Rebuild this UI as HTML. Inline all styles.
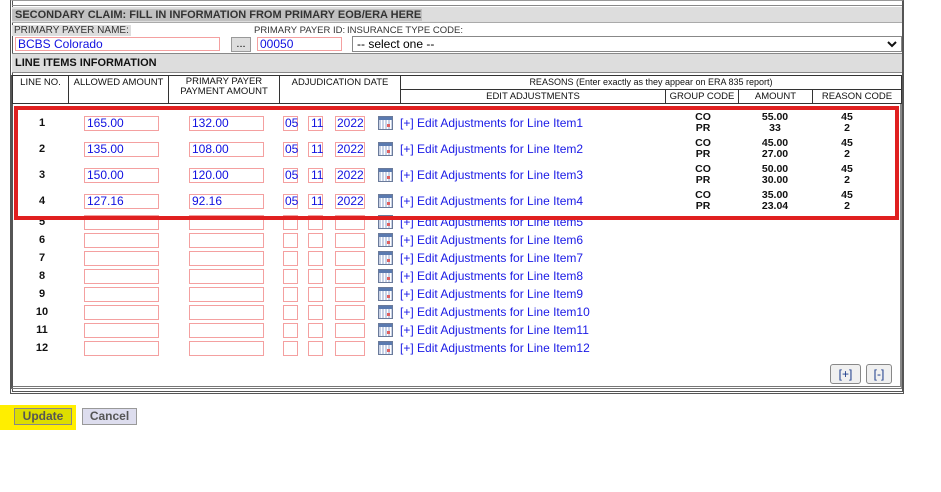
<!DOCTYPE html>
<html><head><meta charset="utf-8"><style>
*{box-sizing:border-box;margin:0;padding:0}
body{width:941px;height:492px;background:#fff;font-family:"Liberation Sans",Arial,sans-serif;position:relative;overflow:hidden}
.a{position:absolute}
.lbl{font-size:10px;color:#333}
.inp{position:absolute;border:1px solid #f4a0a0;background:#fff;font-size:12px;color:#1010e0;padding-left:2px;line-height:13px;height:15px}
.hd{position:absolute;font-size:9.5px;color:#111;text-align:center;border:1px solid #333;background:#fff;padding-top:1px}
.num{position:absolute;font-size:11px;font-weight:bold;color:#111;text-align:center;width:30px}
.link{position:absolute;font-size:12px;color:#1a1ae6;left:400px}
.cal{position:absolute;left:378px;width:15px;height:14px;border:1px solid #6a7a9a;background:repeating-linear-gradient(90deg,#c8d2e6 0 2px,#fff 2px 3px);}
.cal:before{content:"";position:absolute;left:0;right:0;top:0;height:3px;background:#5a7ab0}
.cal:after{content:"";position:absolute;left:8px;top:7px;width:3px;height:3px;background:#e06060}
.cd{position:absolute;font-size:10.5px;font-weight:bold;color:#111;text-align:center;line-height:11px}
</style></head><body>
<div class="a" style="left:10px;top:0;width:894px;height:394px;border-left:3px double #555;border-right:2px solid #555;border-bottom:3px double #555;border-top:1px solid #999"></div>
<div class="a" style="left:12px;top:0;width:890px;height:6px;border-bottom:1px solid #888"></div>
<div class="a" style="left:12px;top:7px;width:890px;height:16px;background:#ddd;border-bottom:1px solid #aaa"></div>
<div class="a" style="left:12px;top:9px;width:410px;height:12px;background:#c0c0c0;font-size:11px;font-weight:bold;color:#333;padding-left:3px;line-height:12px">SECONDARY CLAIM: FILL IN INFORMATION FROM PRIMARY EOB/ERA HERE</div>
<div class="a lbl" style="left:12px;top:25px;background:#ddd;padding:0 2px;height:11px;line-height:11px">PRIMARY PAYER NAME:</div>
<div class="a lbl" style="left:254px;top:25px;line-height:11px;font-size:9.5px">PRIMARY PAYER ID:</div>
<div class="a lbl" style="left:347px;top:25px;line-height:11px;font-size:9.5px">INSURANCE TYPE CODE:</div>
<div class="inp" style="left:15px;top:37px;width:205px;height:14px">BCBS Colorado</div>
<div class="a" style="left:231px;top:37px;width:20px;height:15px;background:#ddd;border:1px solid #999;font-size:11px;text-align:center;line-height:12px">...</div>
<div class="inp" style="left:257px;top:37px;width:85px;height:14px">00050</div>
<div class="a" style="left:352px;top:36px;width:550px;height:16px;border:1px solid #888;font-size:12px;padding-left:4px;line-height:14px">-- select one --<svg style="position:absolute;right:4px;top:4px" width="10" height="7" viewBox="0 0 10 7"><path d="M1 1 L5 5 L9 1" stroke="#111" stroke-width="2" fill="none"/></svg></div>
<div class="a" style="left:12px;top:53px;width:890px;height:20px;background:#ddd;border-top:1px solid #888;border-bottom:1px solid #888;font-size:11px;font-weight:bold;color:#111;padding-left:3px;line-height:19px">LINE ITEMS INFORMATION</div>
<div class="a" style="left:11px;top:75px;width:891px;height:314px;border:2px solid #555;border-right-color:#888;border-bottom:3px double #777"></div>
<div class="hd" style="left:12px;top:75px;width:57px;height:29px">LINE NO.</div>
<div class="hd" style="left:68px;top:75px;width:101px;height:29px">ALLOWED AMOUNT</div>
<div class="hd" style="left:168px;top:75px;width:112px;height:29px;line-height:10px">PRIMARY PAYER<br>PAYMENT AMOUNT</div>
<div class="hd" style="left:279px;top:75px;width:122px;height:29px">ADJUDICATION DATE</div>
<div class="hd" style="left:400px;top:75px;width:502px;height:15px;font-size:9px">REASONS (Enter exactly as they appear on ERA 835 report)</div>
<div class="hd" style="left:400px;top:89px;width:266px;height:15px">EDIT ADJUSTMENTS</div>
<div class="hd" style="left:665px;top:89px;width:74px;height:15px">GROUP CODE</div>
<div class="hd" style="left:738px;top:89px;width:75px;height:15px">AMOUNT</div>
<div class="hd" style="left:812px;top:89px;width:90px;height:15px">REASON CODE</div>
<div id="rows"></div>
<div class="a" style="left:14px;top:106px;width:885px;height:114px;border:4px solid #e02020"></div>
<div class="a" style="left:830px;top:364px;width:31px;height:20px;border:1px solid #888;border-radius:3px;background:#f0f0f0;font-size:12px;text-align:center;line-height:18px;color:#1a3a8a">[+]</div>
<div class="a" style="left:866px;top:364px;width:26px;height:20px;border:1px solid #888;border-radius:3px;background:#f0f0f0;font-size:12px;text-align:center;line-height:18px;color:#1a3a8a">[-]</div>
<div class="a" style="left:0;top:405px;width:76px;height:25px;background:#ffee00"></div>
<div class="a" style="left:14px;top:408px;width:58px;height:17px;background:#dddd00;border:1px solid #888;font-size:12px;font-weight:bold;color:#555;text-align:center;line-height:15px">Update</div>
<div class="a" style="left:82px;top:408px;width:55px;height:17px;background:#dde;border:1px solid #999;font-size:12px;font-weight:bold;color:#555;text-align:center;line-height:15px">Cancel</div>
<script>
var d=[["165.00","132.00",["55.00","33"]],["135.00","108.00",["45.00","27.00"]],["150.00","120.00",["50.00","30.00"]],["127.16","92.16",["35.00","23.04"]]];
var h="";
for(var i=0;i<12;i++){
 var c=i<4?123+26*i:222+18*(i-4);var t=c-7;
 var r=d[i]||["",""];var dt=i<4;
 h+='<div class="num" style="left:27px;top:'+(c-6)+'px">'+(i+1)+'</div>';
 h+='<div class="inp" style="left:84px;top:'+t+'px;width:75px">'+r[0]+'</div>';
 h+='<div class="inp" style="left:189px;top:'+t+'px;width:75px">'+r[1]+'</div>';
 h+='<div class="inp" style="left:283px;top:'+t+'px;width:15px;padding-left:1px">'+(dt?'05':'')+'</div>';
 h+='<div class="inp" style="left:308px;top:'+t+'px;width:15px;padding-left:2px">'+(dt?'11':'')+'</div>';
 h+='<div class="inp" style="left:335px;top:'+t+'px;width:30px;padding-left:1px">'+(dt?'2022':'')+'</div>';
 h+='<div class="cal" style="top:'+(c-7)+'px"></div>';
 h+='<div class="link" style="top:'+(c-7)+'px">[+] Edit Adjustments for Line Item'+(i+1)+'</div>';
 if(dt){
  h+='<div class="cd" style="left:688px;top:'+(c-11)+'px;width:30px">CO<br>PR</div>';
  h+='<div class="cd" style="left:755px;top:'+(c-11)+'px;width:40px">'+r[2][0]+'<br>'+r[2][1]+'</div>';
  h+='<div class="cd" style="left:832px;top:'+(c-11)+'px;width:30px">45<br>2</div>';
 }
}
document.getElementById("rows").outerHTML=h;
</script>
</body></html>
